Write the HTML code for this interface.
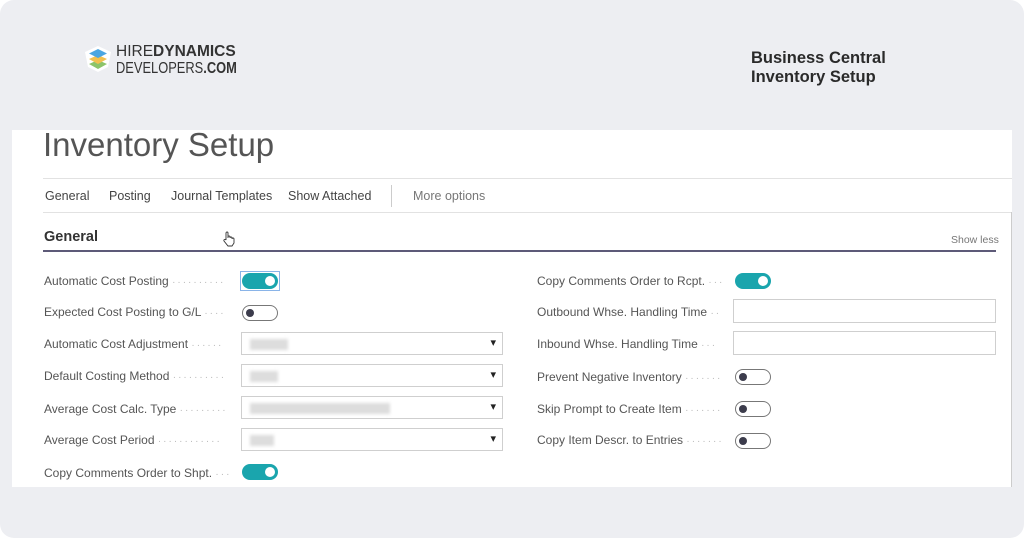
<!DOCTYPE html>
<html><head><meta charset="utf-8"><style>
*{margin:0;padding:0;box-sizing:border-box}
html,body{width:1024px;height:538px;background:#fff;overflow:hidden;font-family:"Liberation Sans",sans-serif}
.bg{position:absolute;left:0;top:0;width:1024px;height:538px;background:#edeef2;border-radius:14px}
.abs{position:absolute}
.panel{position:absolute;left:12px;top:130px;width:1000px;height:357px;background:#fff}
.lbl{position:absolute;font-size:12px;color:#555;white-space:nowrap}
.lbl .d{color:#bbb;letter-spacing:2px;font-size:10px}
.tg{position:absolute;width:36px;height:16px;border-radius:8px}
.tg.on{background:#1aa5ad}
.tg.on:after{content:"";position:absolute;right:3px;top:3px;width:10px;height:10px;border-radius:50%;background:#fff}
.tg.off{border:1px solid #777;background:#fff}
.tg.off:after{content:"";position:absolute;left:3px;top:3px;width:8px;height:8px;border-radius:50%;background:#3c3c4c}
.sel{position:absolute;width:262px;height:23px;border:1px solid #cfcfcf;background:#fff}
.sel:after{content:"▾";position:absolute;right:6px;top:3px;font-size:11px;color:#222}
.blur{position:absolute;left:8px;top:6px;height:11px;background:#ddd;filter:blur(1.5px)}
.inp{position:absolute;width:263px;height:24px;border:1px solid #cfcfcf;background:#fff}
.nav{position:absolute;top:189px;font-size:12.5px;color:#444}
</style></head><body>
<div class="bg"></div>
<svg class="abs" style="left:83px;top:44px" width="30" height="30" viewBox="0 0 30 30">
<path d="M15 2 L28 8 L25 23 L15 28 L5 23 L2 8 Z" fill="#fff"/>
<path d="M15 16 L24 20 L15 25 L6 20Z" fill="#8dc46a"/>
<path d="M15 11 L24 15 L15 20 L6 15Z" fill="#f2c04f"/>
<path d="M15 5 L24 9.5 L15 14 L6 9.5Z" fill="#4ba6e2"/>
</svg>
<div class="abs" style="left:116px;top:43px;font-size:15.5px;color:#333;line-height:17px;white-space:nowrap">
<div style="transform:scaleX(1.0);transform-origin:left">HIRE<b>DYNAMICS</b></div>
<div style="transform:scaleX(0.83);transform-origin:left">DEVELOPERS<b>.COM</b></div></div>
<div class="abs" style="left:751px;top:49px;font-size:16.5px;font-weight:bold;color:#2a2a2a;line-height:19px">Business Central<br>Inventory Setup</div>
<div class="panel"></div>
<div class="abs" style="left:43px;top:126px;font-size:33px;color:#555">Inventory Setup</div>
<div class="abs" style="left:43px;top:178px;width:969px;height:1px;background:#e2e2e2"></div>
<div class="nav" style="left:45px">General</div>
<div class="nav" style="left:109px">Posting</div>
<div class="nav" style="left:171px">Journal Templates</div>
<div class="nav" style="left:288px">Show Attached</div>
<div class="abs" style="left:391px;top:185px;width:1px;height:22px;background:#ccc"></div>
<div class="nav" style="left:413px;color:#777">More options</div>
<div class="abs" style="left:43px;top:212px;width:969px;height:1px;background:#e2e2e2"></div>
<div class="abs" style="left:1011px;top:212px;width:1px;height:275px;background:#ccc"></div>
<div class="abs" style="left:44px;top:229px;font-size:14.5px;font-weight:bold;color:#333">General</div>
<div class="abs" style="left:951px;top:234px;font-size:10.5px;color:#777">Show less</div>
<div class="abs" style="left:43px;top:250px;width:953px;height:2px;background:#5d5a78"></div>

<div class="lbl" style="left:44px;top:274px">Automatic Cost Posting <span class="d">··········</span></div>
<div class="abs" style="left:240px;top:271px;width:40px;height:20px;border:1px solid #8ab4e8"></div>
<div class="tg on" style="left:242px;top:273px"></div>
<div class="lbl" style="left:44px;top:305px">Expected Cost Posting to G/L <span class="d">····</span></div>
<div class="tg off" style="left:242px;top:305px"></div>
<div class="lbl" style="left:44px;top:337px">Automatic Cost Adjustment <span class="d">······</span></div>
<div class="sel" style="left:241px;top:332px"><div class="blur" style="width:38px"></div></div>
<div class="lbl" style="left:44px;top:369px">Default Costing Method <span class="d">··········</span></div>
<div class="sel" style="left:241px;top:364px"><div class="blur" style="width:28px"></div></div>
<div class="lbl" style="left:44px;top:402px">Average Cost Calc. Type <span class="d">·········</span></div>
<div class="sel" style="left:241px;top:396px"><div class="blur" style="width:140px"></div></div>
<div class="lbl" style="left:44px;top:433px">Average Cost Period <span class="d">············</span></div>
<div class="sel" style="left:241px;top:428px"><div class="blur" style="width:24px"></div></div>
<div class="lbl" style="left:44px;top:466px">Copy Comments Order to Shpt. <span class="d">···</span></div>
<div class="tg on" style="left:242px;top:464px"></div>

<div class="lbl" style="left:537px;top:274px">Copy Comments Order to Rcpt. <span class="d">···</span></div>
<div class="tg on" style="left:735px;top:273px"></div>
<div class="lbl" style="left:537px;top:305px">Outbound Whse. Handling Time <span class="d">··</span></div>
<div class="inp" style="left:733px;top:299px"></div>
<div class="lbl" style="left:537px;top:337px">Inbound Whse. Handling Time <span class="d">···</span></div>
<div class="inp" style="left:733px;top:331px"></div>
<div class="lbl" style="left:537px;top:370px">Prevent Negative Inventory <span class="d">·······</span></div>
<div class="tg off" style="left:735px;top:369px"></div>
<div class="lbl" style="left:537px;top:402px">Skip Prompt to Create Item <span class="d">·······</span></div>
<div class="tg off" style="left:735px;top:401px"></div>
<div class="lbl" style="left:537px;top:433px">Copy Item Descr. to Entries <span class="d">·······</span></div>
<div class="tg off" style="left:735px;top:433px"></div>
<svg class="abs" style="left:223px;top:231px" width="12" height="16" viewBox="0 0 12 16"><path d="M3 9 V2 a1 1 0 0 1 2 0 V7 V6 a1 1 0 0 1 2 0 V7 a1 1 0 0 1 2 0 V8 a1 1 0 0 1 2 0 V12 L9 15 H5 L1 10 a1 1 0 0 1 2 -1Z" fill="#fff" stroke="#333" stroke-width="0.9"/></svg>
</body></html>
